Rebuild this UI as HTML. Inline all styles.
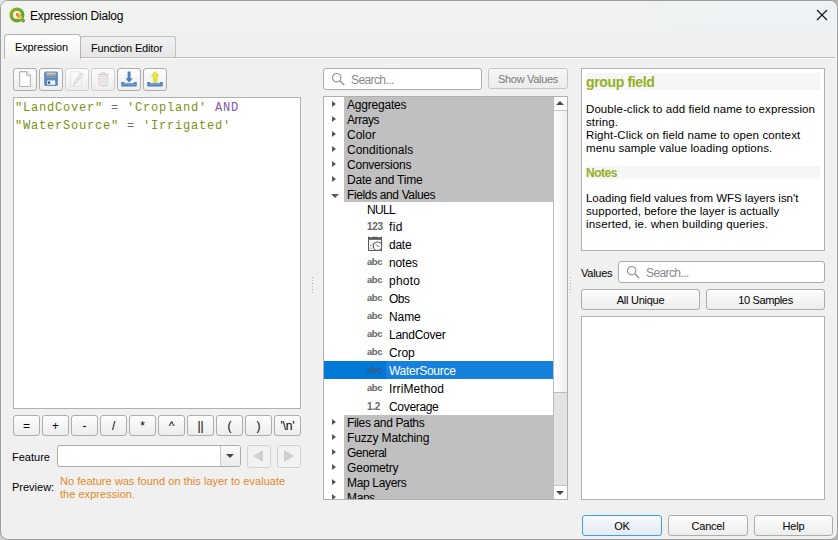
<!DOCTYPE html>
<html>
<head>
<meta charset="utf-8">
<title>Expression Dialog</title>
<style>
*{box-sizing:border-box;margin:0;padding:0}
html,body{width:838px;height:540px;overflow:hidden;background:#b4b4b4;font-family:"Liberation Sans",sans-serif;}
#win{position:absolute;left:0;top:0;width:838px;height:540px;background:#f0f0f0;border:1px solid #9e9e9e;border-radius:8px;overflow:hidden}
.abs{position:absolute}
#titlebar{position:absolute;left:0;top:0;width:836px;height:30px;background:linear-gradient(90deg,#f3f3f1 0%,#f1f2f2 50%,#eef2f4 100%)}
#title{position:absolute;left:29px;top:8px;font-size:12px;letter-spacing:-0.2px;color:#000;line-height:14px;white-space:nowrap}
.t11{font-size:11px;letter-spacing:0;color:#000;white-space:nowrap;line-height:13px}
.t12{font-size:12px;letter-spacing:-0.3px;color:#000;white-space:nowrap;line-height:14px}
.btn{position:absolute;border:1px solid #adadad;border-radius:3px;background:linear-gradient(#fdfdfd,#ededed);font-size:11px;letter-spacing:-0.2px;color:#000;text-align:center;white-space:nowrap}
.help{font-size:11.5px;letter-spacing:0;line-height:13.1px;color:#000;white-space:nowrap}
.box{position:absolute;background:#fff;border:1px solid #b0b0b0}
</style>
</head>
<body>
<div style="position:absolute;left:0;top:0;width:7px;height:7px;background:#e4e4e4"></div>
<div style="position:absolute;left:0;bottom:0;width:7px;height:7px;background:#cfcfcf"></div>
<div id="win">
  <div id="titlebar"></div>
  <div id="title">Expression Dialog</div>

  <!-- tabs -->
  <div class="abs" style="left:3px;top:56px;width:831px;height:1px;background:#bdbdbd"></div>
  <div class="abs" style="left:3px;top:57px;width:831px;height:1px;background:#fbfbfb"></div>
  <div class="abs" style="left:79px;top:35px;width:96px;height:21px;border:1px solid #c2c2c2;border-bottom:none;border-radius:3px 3px 0 0;background:linear-gradient(#f0f0f0,#e6e6e6)"></div>
  <div class="abs t11" style="left:90px;top:41px;letter-spacing:-0.15px">Function Editor</div>
  <div class="abs" style="left:3px;top:33px;width:77px;height:25px;border:1px solid #b4b4b4;border-bottom:none;border-radius:4px 4px 0 0;background:linear-gradient(#ffffff,#f6f6f6 80%,#f0f0f0)"></div>
  <div class="abs t11" style="left:14px;top:40px;letter-spacing:-0.15px">Expression</div>

  <!-- toolbar -->
  <div class="btn" style="left:12px;top:67px;width:24px;height:23px"></div>
  <div class="btn" style="left:38px;top:67px;width:24px;height:23px"></div>
  <div class="btn" style="left:64px;top:67px;width:24px;height:23px;border-color:#d0d0d0"></div>
  <div class="btn" style="left:90px;top:67px;width:24px;height:23px;border-color:#d0d0d0"></div>
  <div class="btn" style="left:116px;top:67px;width:24px;height:23px"></div>
  <div class="btn" style="left:142px;top:67px;width:24px;height:23px"></div>

  <!-- editor -->
  <div class="box" style="left:12px;top:96px;width:288px;height:312px"></div>
  <div class="abs" style="left:14px;top:98px;font-family:'Liberation Mono',monospace;font-size:12px;letter-spacing:0.8px;line-height:18px;white-space:pre;color:#8959a8"><span style="color:#7b9210">"LandCover"</span> = <span style="color:#7b9210">'Cropland'</span> AND
<span style="color:#7b9210">"WaterSource"</span> = <span style="color:#7b9210">'Irrigated'</span></div>

  <!-- operator buttons -->
  <div class="btn op" style="left:12px;top:414px;width:27px;height:21px;line-height:20px;font-size:12px">=</div>
  <div class="btn op" style="left:41px;top:414px;width:27px;height:21px;line-height:20px;font-size:12px">+</div>
  <div class="btn op" style="left:70px;top:414px;width:27px;height:21px;line-height:20px;font-size:12px">-</div>
  <div class="btn op" style="left:99px;top:414px;width:27px;height:21px;line-height:20px;font-size:12px">/</div>
  <div class="btn op" style="left:128px;top:414px;width:27px;height:21px;line-height:20px;font-size:12px">*</div>
  <div class="btn op" style="left:157px;top:414px;width:27px;height:21px;line-height:20px;font-size:12px">^</div>
  <div class="btn op" style="left:186px;top:414px;width:27px;height:21px;line-height:20px;font-size:12px">||</div>
  <div class="btn op" style="left:215px;top:414px;width:27px;height:21px;line-height:20px;font-size:12px">(</div>
  <div class="btn op" style="left:244px;top:414px;width:27px;height:21px;line-height:20px;font-size:12px">)</div>
  <div class="btn op" style="left:273px;top:414px;width:27px;height:21px;line-height:20px;font-size:12px">'\n'</div>

  <!-- feature row -->
  <div class="abs t11" style="left:11px;top:450px">Feature</div>
  <div class="abs" style="left:56px;top:444px;width:184px;height:22px;border:1px solid #adadad;border-radius:3px;background:#fff"></div>
  <div class="abs" style="left:219px;top:445px;width:20px;height:20px;border-left:1px solid #c8c8c8;border-radius:0 2px 2px 0;background:linear-gradient(#fbfbfb,#ebebeb)"></div>
  <div class="abs" style="left:225px;top:453px;width:0;height:0;border-left:4px solid transparent;border-right:4px solid transparent;border-top:4px solid #444"></div>
  <div class="btn" style="left:246px;top:444px;width:24px;height:23px;border-color:#d2d2d2;background:#f2f2f2"></div>
  <div class="abs" style="left:252px;top:449px;width:0;height:0;border-top:6.5px solid transparent;border-bottom:6.5px solid transparent;border-right:10px solid #cfcfcf"></div>
  <div class="btn" style="left:276px;top:444px;width:24px;height:23px;border-color:#d2d2d2;background:#f2f2f2"></div>
  <div class="abs" style="left:283px;top:449px;width:0;height:0;border-top:6.5px solid transparent;border-bottom:6.5px solid transparent;border-left:10px solid #cfcfcf"></div>
  <div class="abs t11" style="left:11px;top:480px">Preview:</div>
  <div class="abs t11" style="left:59px;top:474px;color:#e08a26;line-height:13.3px;letter-spacing:0.03px">No feature was found on this layer to evaluate<br>the expression.</div>

  <!-- splitter handles -->
  <div class="abs" style="left:311px;top:276px;width:1px;height:16px;background:repeating-linear-gradient(#b4b4b4 0 1px,transparent 1px 3px)"></div>
  <div class="abs" style="left:569px;top:276px;width:1px;height:16px;background:repeating-linear-gradient(#b4b4b4 0 1px,transparent 1px 3px)"></div>

  <!-- search -->
  <div class="abs" style="left:322px;top:67px;width:159px;height:22px;border:1px solid #adadad;border-radius:3px;background:#fff"></div>
  <svg class="abs" style="left:329px;top:70px" width="18" height="18" viewBox="0 0 18 18"><circle cx="6.7" cy="6.7" r="4.2" fill="none" stroke="#949494" stroke-width="1.2"/><path d="M9.8 9.8L13.8 13.8" stroke="#949494" stroke-width="1.4" stroke-linecap="round"/></svg>
  <div class="abs t12" style="left:350px;top:72px;color:#8a8a8a;letter-spacing:-0.6px">Search...</div>
  <div class="btn" style="left:487px;top:67px;width:80px;height:21px;line-height:20px;letter-spacing:-0.3px;color:#78787a;border-color:#c6c6c6;background:linear-gradient(#f6f6f6,#ececec)">Show Values</div>

  <!-- tree -->
  <div class="box" style="left:322px;top:95px;width:245px;height:404px;border-color:#b0b0b0"></div>
  <div class="abs" id="tree" style="left:0;top:0;width:568px;height:498px;overflow:hidden">
  <div class="abs" style="left:343px;top:96px;width:209px;height:15px;background:#c0c0c0"></div>
  <div class="abs" style="left:331.3px;top:100.2px;width:0;height:0;border-top:3.6px solid transparent;border-bottom:3.6px solid transparent;border-left:4.2px solid #5a5a5a"></div>
  <div class="abs t12" style="left:346px;top:97px;letter-spacing:-0.21px">Aggregates</div>
  <div class="abs" style="left:343px;top:111px;width:209px;height:15px;background:#c0c0c0"></div>
  <div class="abs" style="left:331.3px;top:115.2px;width:0;height:0;border-top:3.6px solid transparent;border-bottom:3.6px solid transparent;border-left:4.2px solid #5a5a5a"></div>
  <div class="abs t12" style="left:346px;top:112px;letter-spacing:-0.41px">Arrays</div>
  <div class="abs" style="left:343px;top:126px;width:209px;height:15px;background:#c0c0c0"></div>
  <div class="abs" style="left:331.3px;top:130.2px;width:0;height:0;border-top:3.6px solid transparent;border-bottom:3.6px solid transparent;border-left:4.2px solid #5a5a5a"></div>
  <div class="abs t12" style="left:346px;top:127px;letter-spacing:0.0px">Color</div>
  <div class="abs" style="left:343px;top:141px;width:209px;height:15px;background:#c0c0c0"></div>
  <div class="abs" style="left:331.3px;top:145.2px;width:0;height:0;border-top:3.6px solid transparent;border-bottom:3.6px solid transparent;border-left:4.2px solid #5a5a5a"></div>
  <div class="abs t12" style="left:346px;top:142px;letter-spacing:0.01px">Conditionals</div>
  <div class="abs" style="left:343px;top:156px;width:209px;height:15px;background:#c0c0c0"></div>
  <div class="abs" style="left:331.3px;top:160.2px;width:0;height:0;border-top:3.6px solid transparent;border-bottom:3.6px solid transparent;border-left:4.2px solid #5a5a5a"></div>
  <div class="abs t12" style="left:346px;top:157px;letter-spacing:-0.23px">Conversions</div>
  <div class="abs" style="left:343px;top:171px;width:209px;height:15px;background:#c0c0c0"></div>
  <div class="abs" style="left:331.3px;top:175.2px;width:0;height:0;border-top:3.6px solid transparent;border-bottom:3.6px solid transparent;border-left:4.2px solid #5a5a5a"></div>
  <div class="abs t12" style="left:346px;top:172px;letter-spacing:-0.19px">Date and Time</div>
  <div class="abs" style="left:343px;top:186px;width:209px;height:15px;background:#c0c0c0"></div>
  <div class="abs" style="left:329.5px;top:192.5px;width:0;height:0;border-left:4px solid transparent;border-right:4px solid transparent;border-top:4px solid #5a5a5a"></div>
  <div class="abs t12" style="left:346px;top:187px;letter-spacing:-0.37px">Fields and Values</div>
  <div class="abs t12" style="left:366px;top:202px;letter-spacing:-0.65px">NULL</div>
  <div class="abs" style="left:366px;top:219.5px;font-size:10px;font-weight:bold;color:#666666;line-height:11px;letter-spacing:-0.3px">123</div>
  <div class="abs t12" style="left:388px;top:219px;color:#000;letter-spacing:0.34px">fid</div>
  <svg class="abs" style="left:366px;top:235px" width="17" height="16" viewBox="0 0 17 16"><rect x="1.5" y="2" width="13" height="12.5" fill="#fff" stroke="#585858" stroke-width="1"/><rect x="1" y="1.6" width="14" height="2.2" fill="#585858"/><rect x="1" y="0.8" width="2" height="1.5" fill="#585858"/><rect x="5.2" y="0.8" width="5.6" height="1.2" fill="#585858"/><rect x="13" y="0.8" width="2" height="1.5" fill="#585858"/><rect x="3.2" y="8.8" width="1.2" height="1.2" fill="#777"/><rect x="3.2" y="11.6" width="1.2" height="1.2" fill="#777"/><rect x="5.6" y="6.4" width="1" height="5" fill="#999"/><circle cx="10.6" cy="10.2" r="4.2" fill="#fff" stroke="#5e5e5e" stroke-width="1.1"/><path d="M9 8.4L10.6 10.2L12.6 10.6" stroke="#555" stroke-width="0.9" fill="none"/></svg>
  <div class="abs t12" style="left:388px;top:237px;color:#000;letter-spacing:-0.24px">date</div>
  <div class="abs" style="left:366px;top:255px;font-size:9.5px;font-weight:bold;color:#666666;line-height:11px;letter-spacing:-0.45px">abc</div>
  <div class="abs t12" style="left:388px;top:255px;color:#000;letter-spacing:-0.17px">notes</div>
  <div class="abs" style="left:366px;top:273px;font-size:9.5px;font-weight:bold;color:#666666;line-height:11px;letter-spacing:-0.45px">abc</div>
  <div class="abs t12" style="left:388px;top:273px;color:#000;letter-spacing:0.23px">photo</div>
  <div class="abs" style="left:366px;top:291px;font-size:9.5px;font-weight:bold;color:#666666;line-height:11px;letter-spacing:-0.45px">abc</div>
  <div class="abs t12" style="left:388px;top:291px;color:#000;letter-spacing:-0.54px">Obs</div>
  <div class="abs" style="left:366px;top:309px;font-size:9.5px;font-weight:bold;color:#666666;line-height:11px;letter-spacing:-0.45px">abc</div>
  <div class="abs t12" style="left:388px;top:309px;color:#000;letter-spacing:-0.1px">Name</div>
  <div class="abs" style="left:366px;top:327px;font-size:9.5px;font-weight:bold;color:#666666;line-height:11px;letter-spacing:-0.45px">abc</div>
  <div class="abs t12" style="left:388px;top:327px;color:#000;letter-spacing:-0.26px">LandCover</div>
  <div class="abs" style="left:366px;top:345px;font-size:9.5px;font-weight:bold;color:#666666;line-height:11px;letter-spacing:-0.45px">abc</div>
  <div class="abs t12" style="left:388px;top:345px;color:#000;letter-spacing:-0.13px">Crop</div>
  <div class="abs" style="left:323px;top:360px;width:229px;height:18px;background:#0078d7"></div>
  <div class="abs" style="left:385px;top:360px;width:167px;height:18px;background:#1681dc"></div>
  <div class="abs" style="left:366px;top:363px;font-size:9.5px;font-weight:bold;color:#3a5a88;line-height:11px;letter-spacing:-0.45px">abc</div>
  <div class="abs t12" style="left:388px;top:363px;color:#fff;letter-spacing:-0.27px">WaterSource</div>
  <div class="abs" style="left:366px;top:381px;font-size:9.5px;font-weight:bold;color:#666666;line-height:11px;letter-spacing:-0.45px">abc</div>
  <div class="abs t12" style="left:388px;top:381px;color:#000;letter-spacing:0.1px">IrriMethod</div>
  <div class="abs" style="left:366px;top:399.5px;font-size:10px;font-weight:bold;color:#666666;line-height:11px;letter-spacing:-0.3px">1.2</div>
  <div class="abs t12" style="left:388px;top:399px;color:#000;letter-spacing:-0.32px">Coverage</div>
  <div class="abs" style="left:343px;top:414px;width:209px;height:15px;background:#c0c0c0"></div>
  <div class="abs" style="left:331.3px;top:418.2px;width:0;height:0;border-top:3.6px solid transparent;border-bottom:3.6px solid transparent;border-left:4.2px solid #5a5a5a"></div>
  <div class="abs t12" style="left:346px;top:415px;letter-spacing:-0.36px">Files and Paths</div>
  <div class="abs" style="left:343px;top:429px;width:209px;height:15px;background:#c0c0c0"></div>
  <div class="abs" style="left:331.3px;top:433.2px;width:0;height:0;border-top:3.6px solid transparent;border-bottom:3.6px solid transparent;border-left:4.2px solid #5a5a5a"></div>
  <div class="abs t12" style="left:346px;top:430px;letter-spacing:-0.13px">Fuzzy Matching</div>
  <div class="abs" style="left:343px;top:444px;width:209px;height:15px;background:#c0c0c0"></div>
  <div class="abs" style="left:331.3px;top:448.2px;width:0;height:0;border-top:3.6px solid transparent;border-bottom:3.6px solid transparent;border-left:4.2px solid #5a5a5a"></div>
  <div class="abs t12" style="left:346px;top:445px;letter-spacing:-0.49px">General</div>
  <div class="abs" style="left:343px;top:459px;width:209px;height:15px;background:#c0c0c0"></div>
  <div class="abs" style="left:331.3px;top:463.2px;width:0;height:0;border-top:3.6px solid transparent;border-bottom:3.6px solid transparent;border-left:4.2px solid #5a5a5a"></div>
  <div class="abs t12" style="left:346px;top:460px;letter-spacing:-0.17px">Geometry</div>
  <div class="abs" style="left:343px;top:474px;width:209px;height:15px;background:#c0c0c0"></div>
  <div class="abs" style="left:331.3px;top:478.2px;width:0;height:0;border-top:3.6px solid transparent;border-bottom:3.6px solid transparent;border-left:4.2px solid #5a5a5a"></div>
  <div class="abs t12" style="left:346px;top:475px;letter-spacing:-0.34px">Map Layers</div>
  <div class="abs" style="left:343px;top:489px;width:209px;height:15px;background:#c0c0c0"></div>
  <div class="abs" style="left:331.3px;top:493.2px;width:0;height:0;border-top:3.6px solid transparent;border-bottom:3.6px solid transparent;border-left:4.2px solid #5a5a5a"></div>
  <div class="abs t12" style="left:346px;top:490px;letter-spacing:-0.36px">Maps</div>
  </div><!--/tree-->
  <!-- scrollbar -->
  <div class="abs" style="left:552px;top:96px;width:14px;height:402px;background:#e3e3e3;border-left:1px solid #bcbcbc"></div>
  <div class="abs" style="left:553px;top:96px;width:13px;height:14px;background:#fdfdfd;border-bottom:1px solid #c4c4c4"></div>
  <div class="abs" style="left:555px;top:100px;width:0;height:0;border-left:4px solid transparent;border-right:4px solid transparent;border-bottom:4px solid #4a4a4a"></div>
  <div class="abs" style="left:553px;top:110px;width:13px;height:282px;background:linear-gradient(90deg,#ffffff,#efefef);border-bottom:1px solid #bdbdbd"></div>
  <div class="abs" style="left:553px;top:484px;width:13px;height:14px;background:#fdfdfd;border-top:1px solid #c4c4c4"></div>
  <div class="abs" style="left:555px;top:490px;width:0;height:0;border-left:4px solid transparent;border-right:4px solid transparent;border-top:4px solid #4a4a4a"></div>

  <!-- help panel -->
  <div class="box" style="left:580px;top:67px;width:244px;height:183px;border-color:#b0b0b0"></div>
  <div class="abs" style="left:585px;top:72px;width:234px;height:17px;background:#f6f6f6"></div>
  <div class="abs" style="left:585px;top:73px;font-size:14px;font-weight:bold;color:#93b023;line-height:16px;letter-spacing:-0.35px;white-space:nowrap">group field</div>
  <div class="abs help" style="left:585px;top:102px"><span style="letter-spacing:0.076px">Double-click to add field name to expression</span><br><span style="letter-spacing:0.096px">string.</span><br><span style="letter-spacing:0.113px">Right-Click on field name to open context</span><br><span style="letter-spacing:0.086px">menu sample value loading options.</span></div>
  <div class="abs" style="left:585px;top:165px;width:234px;height:13px;background:#f6f6f6"></div>
  <div class="abs" style="left:585px;top:165px;font-size:12px;font-weight:bold;color:#93b023;line-height:14px;letter-spacing:-0.5px;white-space:nowrap">Notes</div>
  <div class="abs help" style="left:585px;top:191px"><span style="letter-spacing:-0.035px">Loading field values from WFS layers isn't</span><br><span style="letter-spacing:0.055px">supported, before the layer is actually</span><br><span style="letter-spacing:0.145px">inserted, ie. when building queries.</span></div>

  <!-- values -->
  <div class="abs t11" style="left:580px;top:266px;letter-spacing:-0.25px">Values</div>
  <div class="abs" style="left:617px;top:260px;width:207px;height:22px;border:1px solid #adadad;border-radius:3px;background:#fff"></div>
  <svg class="abs" style="left:624px;top:263px" width="18" height="18" viewBox="0 0 18 18"><circle cx="6.7" cy="6.7" r="4.2" fill="none" stroke="#949494" stroke-width="1.2"/><path d="M9.8 9.8L13.8 13.8" stroke="#949494" stroke-width="1.4" stroke-linecap="round"/></svg>
  <div class="abs t12" style="left:645px;top:265px;color:#8a8a8a;letter-spacing:-0.6px">Search...</div>
  <div class="btn" style="left:580px;top:288px;width:119px;height:21px;line-height:20px;letter-spacing:-0.25px">All Unique</div>
  <div class="btn" style="left:705px;top:288px;width:119px;height:21px;line-height:20px;letter-spacing:-0.35px">10 Samples</div>
  <div class="box" style="left:580px;top:315px;width:244px;height:184px;border-color:#b0b0b0"></div>

  <!-- dialog buttons -->
  <div class="btn" style="left:581px;top:514px;width:80px;height:21px;line-height:20px;border-color:#3c9ef5;background:linear-gradient(#f6f9fc,#e4eaf2)">OK</div>
  <div class="btn" style="left:667px;top:514px;width:80px;height:21px;line-height:20px">Cancel</div>
  <div class="btn" style="left:753px;top:514px;width:79px;height:21px;line-height:20px">Help</div>

  <!-- close X -->
  <svg class="abs" style="left:814px;top:7px" width="14" height="14" viewBox="0 0 14 14"><path d="M2 2L12 12M12 2L2 12" stroke="#111" stroke-width="1.1" fill="none"/></svg>

  <!-- QGIS logo -->
  <svg class="abs" style="left:7px;top:5px" width="20" height="20" viewBox="0 0 20 20">
    <defs><linearGradient id="qg" x1="0" y1="0" x2="1" y2="1"><stop offset="0" stop-color="#8eb21c"/><stop offset="1" stop-color="#62a030"/></linearGradient>
    <linearGradient id="qt" gradientUnits="userSpaceOnUse" x1="8.5" y1="8.5" x2="17" y2="16.5"><stop offset="0" stop-color="#f3771a"/><stop offset="0.28" stop-color="#f2a33a"/><stop offset="0.42" stop-color="#e6e060"/><stop offset="0.58" stop-color="#7fb23a"/><stop offset="1" stop-color="#5a9a36"/></linearGradient></defs>
    <circle cx="8.9" cy="8.9" r="5.7" fill="#f6f6f4" stroke="url(#qg)" stroke-width="3.6"/>
    <path d="M8 7L10.4 7.2L17 14Q17.5 14.8 16.4 15.9Q15.4 16.9 14.6 16.4L7.7 9.4Z" fill="url(#qt)"/>
  </svg>

  <!-- toolbar icons -->
  <svg class="abs" style="left:16px;top:70px" width="16" height="16" viewBox="0 0 16 16"><path d="M2.6 1.3Q2.6 0.6 3.3 0.6H9.6L13.4 4.4V14.8Q13.4 15.5 12.7 15.5H3.3Q2.6 15.5 2.6 14.8Z" fill="#fff" stroke="#b4b4b4" stroke-width="1.1"/><path d="M9.6 0.8V4.4H13.2" fill="#f0f0f0" stroke="#b4b4b4" stroke-width="0.9"/></svg>
  <svg class="abs" style="left:42px;top:70px" width="16" height="16" viewBox="0 0 16 16"><rect x="1.1" y="0.6" width="13.8" height="14.4" rx="1.8" fill="#5a8cc6"/><rect x="3.3" y="1.6" width="9.4" height="5" fill="#a8a8a8"/><rect x="3.3" y="1.6" width="9.4" height="1.6" fill="#c4c4c4"/><rect x="3.3" y="4.6" width="9.4" height="1.6" fill="#8e8e8e"/><rect x="4.2" y="9.4" width="8" height="4.4" fill="#f2f2f2"/><rect x="5" y="10.4" width="2.2" height="2.4" fill="#2e4f7e"/></svg>
  <svg class="abs" style="left:68px;top:70px" width="16" height="16" viewBox="0 0 16 16" opacity="0.55"><path d="M1.6 0.6H9.5L12.6 3.7V15.4H1.6Z" fill="#fbfbfb" stroke="#cfcfcf" stroke-width="0.9"/><path d="M12.3 1.6L14.3 3.2L7 12.8L4.3 14.2L4.9 11.2Z" fill="#d6d6d0" stroke="#bdbdb8" stroke-width="0.7"/></svg>
  <svg class="abs" style="left:94px;top:70px" width="16" height="16" viewBox="0 0 16 16"><path d="M2.8 3.3H13.6" stroke="#dccaca" stroke-width="1.3"/><path d="M6.5 2.8V1.6H10V2.8" stroke="#d9cccc" stroke-width="1" fill="none"/><path d="M3.8 5L4.6 14.8H11.8L12.6 5Z" fill="#f6f2f2" stroke="#d9cccc" stroke-width="1"/><path d="M6.4 6.5V13.4M8.2 6.5V13.4M10 6.5V13.4" stroke="#dfd4d4" stroke-width="0.9"/></svg>
  <svg class="abs" style="left:120px;top:70px" width="16" height="16" viewBox="0 0 16 16"><path d="M6.6 0.4H9.6V7.2H11.9L8.1 11.5L4.4 7.2H6.6Z" fill="#4f82bd"/><path d="M0.2 11.8Q0.2 11.1 0.9 11.1H3.1V12.3H12.9V11.1H15.1Q15.8 11.1 15.8 11.8V14.6Q15.8 15.5 14.9 15.5H1.1Q0.2 15.5 0.2 14.6Z" fill="#4f82bd"/><path d="M0.6 13.4H15.4" stroke="#79a5d6" stroke-width="0.8"/></svg>
  <svg class="abs" style="left:146px;top:70px" width="16" height="16" viewBox="0 0 16 16"><path d="M0.2 11.8Q0.2 11.1 0.9 11.1H3.1V12.3H12.9V11.1H15.1Q15.8 11.1 15.8 11.8V14.6Q15.8 15.5 14.9 15.5H1.1Q0.2 15.5 0.2 14.6Z" fill="#4f82bd"/><path d="M0.6 13.4H15.4" stroke="#79a5d6" stroke-width="0.8"/><path d="M8.2 0.5L12 5.2H10.1V11.6H6.4V5.2H4.4Z" fill="#e9e431" stroke="#c9c52a" stroke-width="0.5"/></svg>
</div>
</body>
</html>
